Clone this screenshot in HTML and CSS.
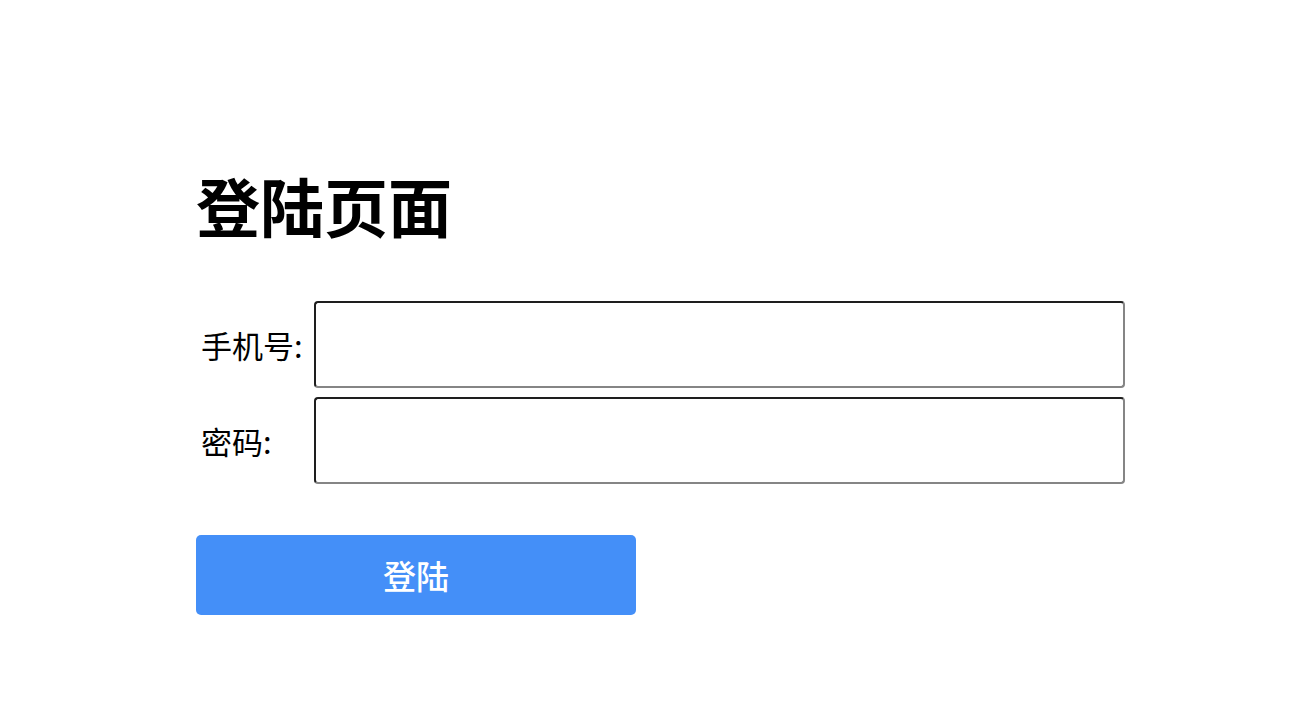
FILE: index.html
```html
<!DOCTYPE html>
<html lang="zh-CN">
<head>
<meta charset="utf-8">
<title>登陆页面</title>
<link rel="stylesheet" href="styles.css">
</head>
<body>
<main class="page">
  <h1 class="title">登陆页面</h1>
  <form class="form">
    <div class="row">
      <label class="label" for="phone">手机号:</label>
      <input class="input" id="phone" type="text">
    </div>
    <div class="row">
      <label class="label" for="pwd">密码:</label>
      <input class="input" id="pwd" type="password">
    </div>
    <button class="btn" type="button">登陆</button>
  </form>
</main>
</body>
</html>
```

FILE: styles.css
```css
html, body {
  margin: 0;
  padding: 0;
  background: #fff;
}
body {
  font-family: "Noto Sans CJK SC", "Noto Sans", sans-serif;
  color: #000;
}
.page {
  padding: 172px 0 0 196px;
}
.title {
  margin: 0;
  font-size: 64px;
  line-height: 64px;
  font-weight: 700;
  height: 64px;
}
.form {
  margin-top: 65px;
  display: flex;
  flex-direction: column;
}
.row {
  display: flex;
  align-items: center;
  margin-bottom: 9px;
}
.label {
  width: 113px;
  padding-left: 5px;
  font-size: 31px;
  line-height: 40px;
}
.input {
  box-sizing: border-box;
  width: 811px;
  height: 87px;
  margin: 0;
  border-style: solid;
  border-width: 2px;
  border-color: #1e1e1e #858585 #858585 #1e1e1e;
  border-radius: 4px;
  background: #fff;
  font-size: 24px;
  padding: 0 10px;
}
.btn {
  margin-top: 42px;
  width: 440px;
  height: 80px;
  border: none;
  border-radius: 5px;
  background: #448ff8;
  color: #fff;
  font-family: "Noto Sans CJK SC", "Noto Sans", sans-serif;
  font-size: 33px;
  font-weight: 500;
  padding: 0;
  cursor: pointer;
}
```
